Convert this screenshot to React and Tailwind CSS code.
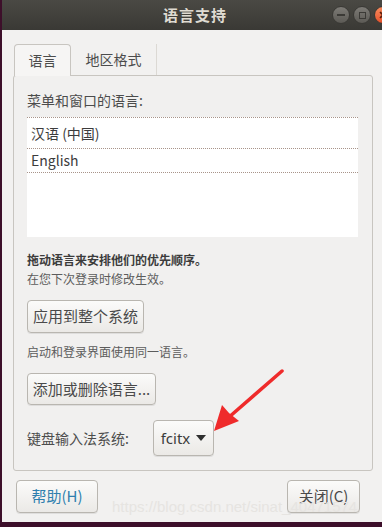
import React from "react";

const font = { fontFamily: '"Noto Sans CJK SC", "Noto Sans", sans-serif' };

function Btn({ children, className = "" }) {
  return (
    <div
      className={
        "flex items-center justify-center rounded-[4px] border border-[#b9b6b0] bg-gradient-to-b from-[#fbfbfa] to-[#ebe9e6] shadow-[0_1px_0_rgba(0,0,0,0.08)] " +
        className
      }
    >
      {children}
    </div>
  );
}

export default function App() {
  return (
    <div className="relative w-[382px] h-[527px] bg-[#3d0f2a] overflow-hidden" style={font}>
      <div className="ml-[2px] w-[382px] h-[522px] bg-[#f2f1f0] flex flex-col">
        {/* Title bar */}
        <div className="relative h-[30px] shrink-0 bg-gradient-to-b from-[#4a4944] to-[#3a3935] flex items-center justify-center">
          <span className="text-[15px] font-bold text-[#dfdbd2] tracking-[1px] ml-[4px]">语言支持</span>
          <div className="absolute right-[-8px] top-[6px] flex gap-[3px]">
            <div className="w-[18px] h-[18px] rounded-full bg-gradient-to-b from-[#7d7b76] to-[#5c5a55] border border-[#3a3935] flex items-center justify-center">
              <div className="w-[8px] h-[1.5px] bg-[#3b3a36]" />
            </div>
            <div className="w-[18px] h-[18px] rounded-full bg-gradient-to-b from-[#7d7b76] to-[#5c5a55] border border-[#3a3935] flex items-center justify-center">
              <div className="w-[7px] h-[7px] border border-[#3b3a36]" />
            </div>
            <div className="w-[18px] h-[18px] rounded-full bg-gradient-to-b from-[#f68b5d] to-[#e5502a] border border-[#3a3935] flex items-center justify-center">
              <svg width="8" height="8" viewBox="0 0 8 8">
                <path d="M1 1L7 7M7 1L1 7" stroke="#5a1d0a" strokeWidth="1.6" />
              </svg>
            </div>
          </div>
        </div>

        {/* Body */}
        <div className="flex-1 flex flex-col px-[11px] pt-[13px]">
          {/* Tabs */}
          <div className="flex items-end h-[32px] pl-[1px]">
            <div className="relative z-10 h-[32px] w-[57px] bg-[#f6f5f4] border border-[#c8c5c0] border-b-0 rounded-t-[4px] flex items-center justify-center text-[14px] text-[#4c4c4c] mb-[-1px]">
              语言
            </div>
            <div className="h-[31px] w-[86px] border-r border-[#dcd9d4] flex items-center justify-center text-[14px] text-[#4c4c4c]">
              地区格式
            </div>
          </div>
          {/* Notebook panel */}
          <div className="h-[396px] border border-[#c8c5c0] rounded-[3px] bg-[#f1f0ef] px-[13px] pt-[14px] flex flex-col">
            <div className="text-[14px] text-[#4c4c4c] leading-[20px]">菜单和窗口的语言:</div>
            <div className="mt-[7px] h-[120px] bg-white mr-[1px]">
              <div className="border-t border-dotted border-[#a8948a] h-[31px] flex items-center pl-[4px] text-[14px] text-[#3c3c3c]">
                汉语 (中国)
              </div>
              <div className="border-t border-b border-dotted border-[#a8948a] h-[25px] flex items-center pl-[4px] text-[14px] text-[#3c3c3c]">
                English
              </div>
            </div>
            <div className="mt-[15px] text-[12px] font-bold text-[#3c3c3c] leading-[16px]">拖动语言来安排他们的优先顺序。</div>
            <div className="mt-[3px] text-[12px] text-[#5c5c5c] leading-[16px]">在您下次登录时修改生效。</div>
            <Btn className="mt-[13px] w-[117px] h-[33px] text-[15px] text-[#4a4a4a]">应用到整个系统</Btn>
            <div className="mt-[11px] text-[12px] text-[#5c5c5c] leading-[16px]">启动和登录界面使用同一语言。</div>
            <Btn className="mt-[13px] w-[129px] h-[32px] text-[15px] text-[#4a4a4a]">添加或删除语言...</Btn>
            <div className="mt-[15px] flex items-center">
              <div className="text-[14px] text-[#4c4c4c] w-[126px]">键盘输入法系统:</div>
              <Btn className="w-[61px] h-[36px] text-[15px] text-[#3c3c3c] gap-[6px]">
                <span style={{ fontFamily: '"Noto Sans", sans-serif' }}>fcitx</span>
                <svg width="10" height="6" viewBox="0 0 10 6"><path d="M0 0h10L5 6z" fill="#2f2f2f" /></svg>
              </Btn>
            </div>
          </div>
          {/* Bottom buttons */}
          <div className="relative mt-[9px] flex justify-between pl-[3px] pr-[13px]">
            <Btn className="w-[82px] h-[33px] text-[15px] text-[#2f7fae]">帮助(H)</Btn>
            <Btn className="w-[73px] h-[33px] text-[15px] text-[#4a4a4a]">关闭(C)</Btn>
            <div
              className="absolute left-[99px] top-[18px] text-[15px] leading-[18px] text-[#e6e4e1] pointer-events-none whitespace-nowrap"
              style={{ fontFamily: '"Liberation Sans", sans-serif' }}
            >
              https://blog.csdn.net/sinat_40471574
            </div>
          </div>
        </div>
      </div>
      {/* Red arrow annotation */}
      <svg className="absolute left-0 top-0 pointer-events-none" width="382" height="527">
        <path d="M282 371 L228 418" stroke="#ef2b2b" strokeWidth="3.5" strokeLinecap="round" fill="none" />
        <path d="M214 431 L222 405 L229 413 L239 421 Z" fill="#ef2b2b" />
      </svg>
    </div>
  );
}
